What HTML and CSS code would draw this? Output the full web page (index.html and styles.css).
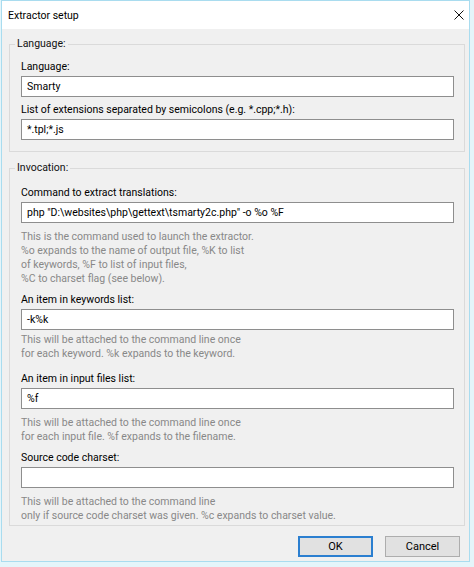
FILE: index.html
```html
<!DOCTYPE html>
<html lang="en">
<head>
<meta charset="utf-8">
<title>Extractor setup</title>
<link rel="stylesheet" href="styles.css">
</head>
<body>
<div class="window">
  <div class="titlebar">
    <span class="title">Extractor setup</span>
    <svg class="close" width="10" height="10" viewBox="0 0 10 10"><path d="M0.5 0.5L9.5 9.5M9.5 0.5L0.5 9.5" stroke="#111" stroke-width="1" fill="none"/></svg>
  </div>
  <div class="content">
    <fieldset class="group g1">
      <legend>Language:</legend>
      <div class="lbl">Language:</div>
      <div class="field">Smarty</div>
      <div class="lbl after-field">List of extensions separated by semicolons (e.g. *.cpp;*.h):</div>
      <div class="field">*.tpl;*.js</div>
    </fieldset>
    <fieldset class="group g2">
      <legend>Invocation:</legend>
      <div class="lbl">Command to extract translations:</div>
      <div class="field">php "D:\websites\php\gettext\tsmarty2c.php" -o %o %F</div>
      <div class="help">This is the command used to launch the extractor.<br>%o expands to the name of output file, %K to list<br>of keywords, %F to list of input files,<br>%C to charset flag (see below).</div>
      <div class="lbl after-help">An item in keywords list:</div>
      <div class="field">-k%k</div>
      <div class="help help-tight">This will be attached to the command line once<br>for each keyword. %k expands to the keyword.</div>
      <div class="lbl after-help-wide">An item in input files list:</div>
      <div class="field">%f</div>
      <div class="help">This will be attached to the command line once<br>for each input file. %f expands to the filename.</div>
      <div class="lbl after-help">Source code charset:</div>
      <div class="field"></div>
      <div class="help">This will be attached to the command line<br>only if source code charset was given. %c expands to charset value.</div>
    </fieldset>
    <div class="buttons">
      <button class="btn btn-default">OK</button>
      <button class="btn">Cancel</button>
    </div>
  </div>
</div>
</body>
</html>
```
FILE: styles.css
```css
html, body {
  margin: 0;
  padding: 0;
}
body {
  background: #e4f5fa;
  width: 474px;
  height: 567px;
  font-family: Roboto, "Noto Sans", sans-serif;
  font-size: 10.5px;
  color: #000;
}
.window {
  margin-left: 1px;
  width: 469px;
  box-sizing: border-box;
  border: 1px solid #a9dcef;
  background: #f0f0f0;
}
.titlebar {
  height: 28px;
  background: #fff;
  display: flex;
  align-items: center;
  justify-content: space-between;
  padding: 0 5px 0 6px;
}
.title {
  font-size: 10.5px;
  color: #000;
  line-height: 14px;
  margin-top: 1px;
}
.close {
  display: block;
}
.content {
  padding: 8px 4px 4px 7px;
}
.group {
  margin: 0;
  border: 1px solid #dadada;
  padding: 9px 10px 11px 11px;
  min-inline-size: 0;
}
.group legend {
  padding: 0 2px;
  margin-left: -6px;
  line-height: 14px;
  color: #111;
}
.g2 {
  margin-top: 9px;
  padding-top: 11px;
  padding-bottom: 2px;
}
.lbl {
  line-height: 14px;
  margin-bottom: 2px;
  white-space: nowrap;
  color: #000;
}
.after-field {
  margin-top: 6px;
}
.after-help {
  margin-top: 7px;
}
.after-help-wide {
  margin-top: 11px;
}
.field {
  height: 21px;
  box-sizing: border-box;
  border: 1px solid #8e8e8e;
  background: #fff;
  padding: 0 5px;
  line-height: 19px;
  white-space: nowrap;
  overflow: hidden;
}
.help {
  margin-top: 7px;
  line-height: 14px;
  color: #888;
  white-space: nowrap;
}
.help-tight {
  margin-top: 3px;
}
.buttons {
  display: flex;
  justify-content: flex-end;
  gap: 12px;
  margin-top: 10px;
  padding-right: 5px;
}
.btn {
  width: 75px;
  height: 21px;
  box-sizing: border-box;
  margin: 0;
  padding: 0;
  background: #e1e1e1;
  border: 1px solid #adadad;
  font-family: inherit;
  font-size: 11px;
  color: #000;
  line-height: 19px;
}
.btn-default {
  border-color: #2b7fd0;
  box-shadow: inset 0 0 0 1px #2b7fd0;
}
```
